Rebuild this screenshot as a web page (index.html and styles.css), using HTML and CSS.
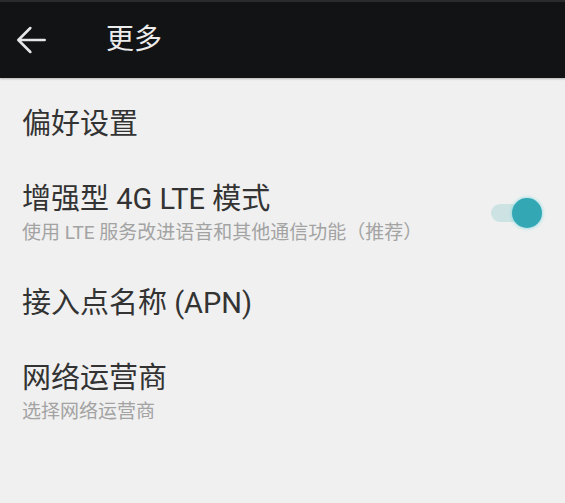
FILE: index.html
```html
<!DOCTYPE html>
<html lang="zh-CN">
<head>
<meta charset="utf-8">
<title>更多</title>
<link rel="stylesheet" href="styles.css">
</head>
<body>
<div class="screen">
  <header class="appbar">
    <svg class="back" viewBox="0 0 24 24" width="40" height="40" aria-hidden="true">
      <path d="M20.2 12H4.6M11.6 4.8L4.4 12l7.2 7.2" fill="none" stroke="#e6e6e6" stroke-width="1.55" stroke-linecap="round" stroke-linejoin="round"/>
    </svg>
    <h1 class="appbar-title">更多</h1>
  </header>
  <ul class="prefs">
    <li class="pref">
      <div class="pref-text">
        <div class="pref-title">偏好设置</div>
      </div>
    </li>
    <li class="pref">
      <div class="pref-text">
        <div class="pref-title">增强型 4G LTE 模式</div>
        <div class="pref-summary">使用 LTE 服务改进语音和其他通信功能（推荐）</div>
      </div>
      <div class="switch" role="switch" aria-checked="true">
        <span class="switch-track"></span>
        <span class="switch-thumb"></span>
      </div>
    </li>
    <li class="pref">
      <div class="pref-text">
        <div class="pref-title">接入点名称 (APN)</div>
      </div>
    </li>
    <li class="pref">
      <div class="pref-text">
        <div class="pref-title">网络运营商</div>
        <div class="pref-summary">选择网络运营商</div>
      </div>
    </li>
  </ul>
</div>
</body>
</html>
```

FILE: styles.css
```css
* { box-sizing: border-box; }
html, body {
  margin: 0;
  padding: 0;
  background: #f0f0f0;
}
body {
  font-family: Roboto, "Noto Sans CJK SC", sans-serif;
  width: 565px;
  height: 503px;
  overflow: hidden;
}
.screen {
  display: flex;
  flex-direction: column;
  height: 100%;
}
.appbar {
  height: 78px;
  background: #121314;
  border-top: 2px solid #2a2b2c;
  display: flex;
  align-items: center;
  padding-left: 11px;
  box-shadow: 0 1px 2px rgba(0,0,0,0.25);
}
.back {
  display: block;
  flex: none;
}
.appbar-title {
  margin: 0 0 0 55px;
  font-size: 28px;
  font-weight: 400;
  color: #ececec;
  line-height: 36px;
}
.prefs {
  list-style: none;
  margin: 0;
  padding: 8px 0 0 0;
}
.pref {
  display: flex;
  align-items: center;
  padding: 19.5px 22px 19.5px 22px;
}
.pref-text {
  flex: 1;
  min-width: 0;
}
.pref-title {
  font-size: 29px;
  line-height: 36px;
  color: #333333;
}
.pref-summary {
  margin-top: 3px;
  font-size: 19px;
  line-height: 26px;
  color: #a3a3a3;
}
.switch {
  position: relative;
  width: 54px;
  height: 34px;
  flex: none;
}
.switch-track {
  position: absolute;
  left: 2px;
  top: 8px;
  width: 38px;
  height: 18px;
  border-radius: 9px;
  background: #cde3e3;
}
.switch-thumb {
  position: absolute;
  right: 1px;
  top: 2px;
  width: 30px;
  height: 30px;
  border-radius: 50%;
  background: #33a8b4;
  box-shadow: 0 0 3px 1px rgba(120, 215, 225, 0.6);
}
```
